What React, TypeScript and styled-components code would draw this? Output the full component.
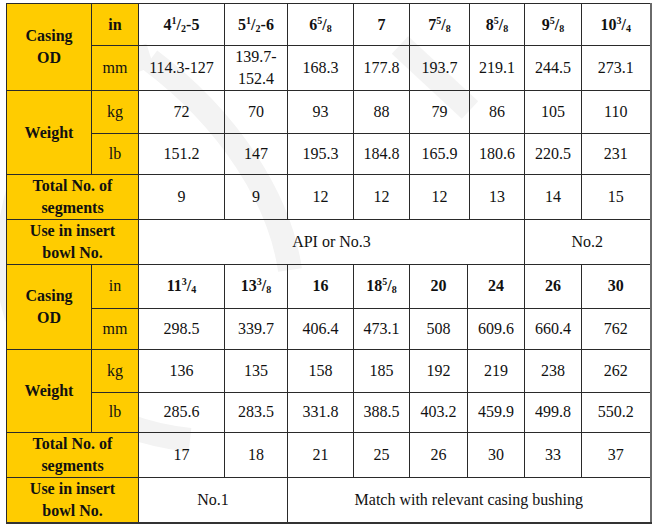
import React from "react";
import styled, { createGlobalStyle } from "styled-components";

const Global = createGlobalStyle`
  html, body { margin: 0; padding: 0; background: #ffffff; }
  body, table, td { font-family: 'Liberation Serif', 'Times New Roman', serif; color: #111; }
`;

const Page = styled.div`
  position: relative;
  width: 655px;
  height: 526px;
  padding: 3px 0 0 6px;
  box-sizing: border-box;
  overflow: hidden;
  font-family: 'Liberation Serif', serif;
`;

const Watermark = styled.svg`
  position: absolute;
  left: 0;
  top: 0;
  z-index: 0;
  pointer-events: none;
`;

const Stack = styled.div`
  position: relative;
  z-index: 1;
  display: flex;
  flex-direction: column;
  width: 645px;
`;

const Table = styled.table<{ $first?: boolean }>`
  border-collapse: collapse;
  table-layout: fixed;
  width: 645px;
  font-family: 'Liberation Serif', serif;
  border-right: 2px solid #6a6a6a;
  ${(p) => (p.$first ? "" : "tr:first-child > td { border-top: 0; }")}
  ${(p) => (p.$first ? "" : "tr:last-child > td { border-bottom: 2px solid #333; }")}
`;

const Row = styled.tr<{ $h: number }>`
  height: ${(p) => p.$h}px;
`;

const Cell = styled.td<{ $label?: boolean; $bold?: boolean }>`
  border: 1px solid #2a2a2a;
  padding: 0;
  text-align: center;
  vertical-align: middle;
  font-family: 'Liberation Serif', serif;
  font-size: 16px;
  line-height: 22px;
  font-weight: ${(p) => (p.$bold ? 700 : 400)};
  background: ${(p) => (p.$label ? "#ffcc00" : "transparent")};
  color: #111;
`;

const Sup = styled.sup`
  font-size: 10px;
  line-height: 0;
  vertical-align: 6px;
`;

const Sub = styled.sub`
  font-size: 10px;
  line-height: 0;
  vertical-align: -2px;
`;

const Frac = ({ w, n, d, tail }: { w: string; n: string; d: string; tail?: string }) => (
  <>
    {w}
    <Sup>{n}</Sup>/<Sub>{d}</Sub>
    {tail}
  </>
);

type Block = {
  cols: number[];
  heights: number[];
  inBold: boolean;
  sizes: React.ReactNode[];
  mm: React.ReactNode[];
  kg: string[];
  lb: string[];
  seg: string[];
  use: { text: string; span: number }[];
};

const top: Block = {
  cols: [85, 47, 86, 63, 66, 56, 60, 55, 57, 69],
  heights: [42, 44, 43, 41, 45, 44],
  inBold: true,
  sizes: [
    <Frac w="4" n="1" d="2" tail="-5" />,
    <Frac w="5" n="1" d="2" tail="-6" />,
    <Frac w="6" n="5" d="8" />,
    "7",
    <Frac w="7" n="5" d="8" />,
    <Frac w="8" n="5" d="8" />,
    <Frac w="9" n="5" d="8" />,
    <Frac w="10" n="3" d="4" />,
  ],
  mm: [
    "114.3-127",
    <>
      139.7-
      <br />
      152.4
    </>,
    "168.3",
    "177.8",
    "193.7",
    "219.1",
    "244.5",
    "273.1",
  ],
  kg: ["72", "70", "93", "88", "79", "86", "105", "110"],
  lb: ["151.2", "147", "195.3", "184.8", "165.9", "180.6", "220.5", "231"],
  seg: ["9", "9", "12", "12", "12", "13", "14", "15"],
  use: [
    { text: "API or No.3", span: 6 },
    { text: "No.2", span: 2 },
  ],
};

const bottom: Block = {
  cols: [85, 47, 86, 63, 66, 56, 58, 57, 57, 69],
  heights: [43, 41, 43, 40, 44, 44],
  inBold: false,
  sizes: [
    <Frac w="11" n="3" d="4" />,
    <Frac w="13" n="3" d="8" />,
    "16",
    <Frac w="18" n="5" d="8" />,
    "20",
    "24",
    "26",
    "30",
  ],
  mm: ["298.5", "339.7", "406.4", "473.1", "508", "609.6", "660.4", "762"],
  kg: ["136", "135", "158", "185", "192", "219", "238", "262"],
  lb: ["285.6", "283.5", "331.8", "388.5", "403.2", "459.9", "499.8", "550.2"],
  seg: ["17", "18", "21", "25", "26", "30", "33", "37"],
  use: [
    { text: "No.1", span: 2 },
    { text: "Match with relevant casing bushing", span: 6 },
  ],
};

const SpecTable = ({ b, first }: { b: Block; first?: boolean }) => (
  <Table $first={first}>
    <colgroup>
      {b.cols.map((w, i) => (
        <col key={i} style={{ width: w }} />
      ))}
    </colgroup>
    <tbody>
      <Row $h={b.heights[0]}>
        <Cell $label $bold rowSpan={2}>
          Casing
          <br />
          OD
        </Cell>
        <Cell $label $bold={b.inBold}>in</Cell>
        {b.sizes.map((s, i) => (
          <Cell key={i} $bold>
            {s}
          </Cell>
        ))}
      </Row>
      <Row $h={b.heights[1]}>
        <Cell $label>mm</Cell>
        {b.mm.map((s, i) => (
          <Cell key={i}>{s}</Cell>
        ))}
      </Row>
      <Row $h={b.heights[2]}>
        <Cell $label $bold rowSpan={2}>
          Weight
        </Cell>
        <Cell $label>kg</Cell>
        {b.kg.map((s, i) => (
          <Cell key={i}>{s}</Cell>
        ))}
      </Row>
      <Row $h={b.heights[3]}>
        <Cell $label>lb</Cell>
        {b.lb.map((s, i) => (
          <Cell key={i}>{s}</Cell>
        ))}
      </Row>
      <Row $h={b.heights[4]}>
        <Cell $label $bold colSpan={2}>
          Total No. of
          <br />
          segments
        </Cell>
        {b.seg.map((s, i) => (
          <Cell key={i}>{s}</Cell>
        ))}
      </Row>
      <Row $h={b.heights[5]}>
        <Cell $label $bold colSpan={2}>
          Use in insert
          <br />
          bowl No.
        </Cell>
        {b.use.map((u, i) => (
          <Cell key={i} colSpan={u.span}>
            {u.text}
          </Cell>
        ))}
      </Row>
    </tbody>
  </Table>
);

export default function App() {
  return (
    <>
      <Global />
      <Page>
        <Watermark width={655} height={526} viewBox="0 0 655 526">
          <g fill="none" stroke="#f3f3f3" strokeWidth={24} strokeLinecap="butt">
            <path d="M 150 55 C 40 90 -5 200 12 300 C 30 380 100 430 190 440" />
            <path d="M 150 60 C 230 120 280 200 290 270" />
            <path d="M 400 45 L 470 110" />
          </g>
        </Watermark>
        <Stack>
          <SpecTable b={top} first />
          <SpecTable b={bottom} />
        </Stack>
      </Page>
    </>
  );
}
